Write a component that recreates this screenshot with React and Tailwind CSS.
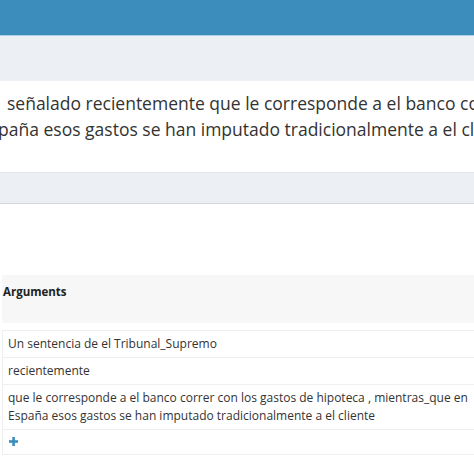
import React from "react";

const rows = [
  ["Un sentencia de el Tribunal_Supremo"],
  ["recientemente"],
  [
    "que le corresponde a el banco correr con los gastos de hipoteca , mientras_que en",
    "España esos gastos se han imputado tradicionalmente a el cliente",
  ],
];

const PlusIcon = () => (
  <svg width="9" height="9" viewBox="0 0 9 9" className="text-[#3c8dbc]">
    <rect x="3.3" y="0" width="2.6" height="9" fill="currentColor" />
    <rect x="0" y="3.2" width="9" height="2.6" fill="currentColor" />
  </svg>
);

const App = () => {
  return (
    <div
      className="w-[474px] h-[474px] overflow-hidden bg-white text-[#333]"
      style={{ fontFamily: '"Open Sans", "Liberation Sans", sans-serif' }}
    >
      {/* top bar */}
      <div className="h-[35px] bg-[#3c8dbc]" />
      <div className="h-px bg-[#a8d0ea]" />
      <div className="h-[45px] bg-[#ecf0f5]" />

      {/* sentence, cut at the edges of the view */}
      <div className="h-[91px] bg-white overflow-hidden pt-[9px] text-[17.5px] leading-[26px] whitespace-nowrap">
        <div className="pl-[7px]">señalado recientemente que le corresponde a el banco correr con los gastos</div>
        <div className="-ml-[20px]">España esos gastos se han imputado tradicionalmente a el cliente</div>
      </div>

      <div className="h-[32px] bg-[#ecf0f5] border-t border-[#e2e5ea] border-b border-b-[#d2d6de]" />
      <div className="h-[71px]" />

      {/* arguments */}
      <div className="ml-[2px]">
        <div className="h-[48px] bg-[#f7f7f7] pt-[8px] pl-px text-[11.5px] leading-[18px] font-bold text-[#222]">
          Arguments
        </div>
        <div className="mt-[7px] border-l border-t border-b border-[#efefef]">
          {rows.map((lines, i) => (
            <div
              key={i}
              className="border-b border-[#efefef] px-[5px] py-[4px] text-[12px] leading-[18px] whitespace-nowrap"
            >
              {lines.map((l, j) => (
                <div key={j}>{l}</div>
              ))}
            </div>
          ))}
          <div className="h-[24px] pl-[6px] pt-[7px]">
            <PlusIcon />
          </div>
        </div>
      </div>
    </div>
  );
};

export default App;
